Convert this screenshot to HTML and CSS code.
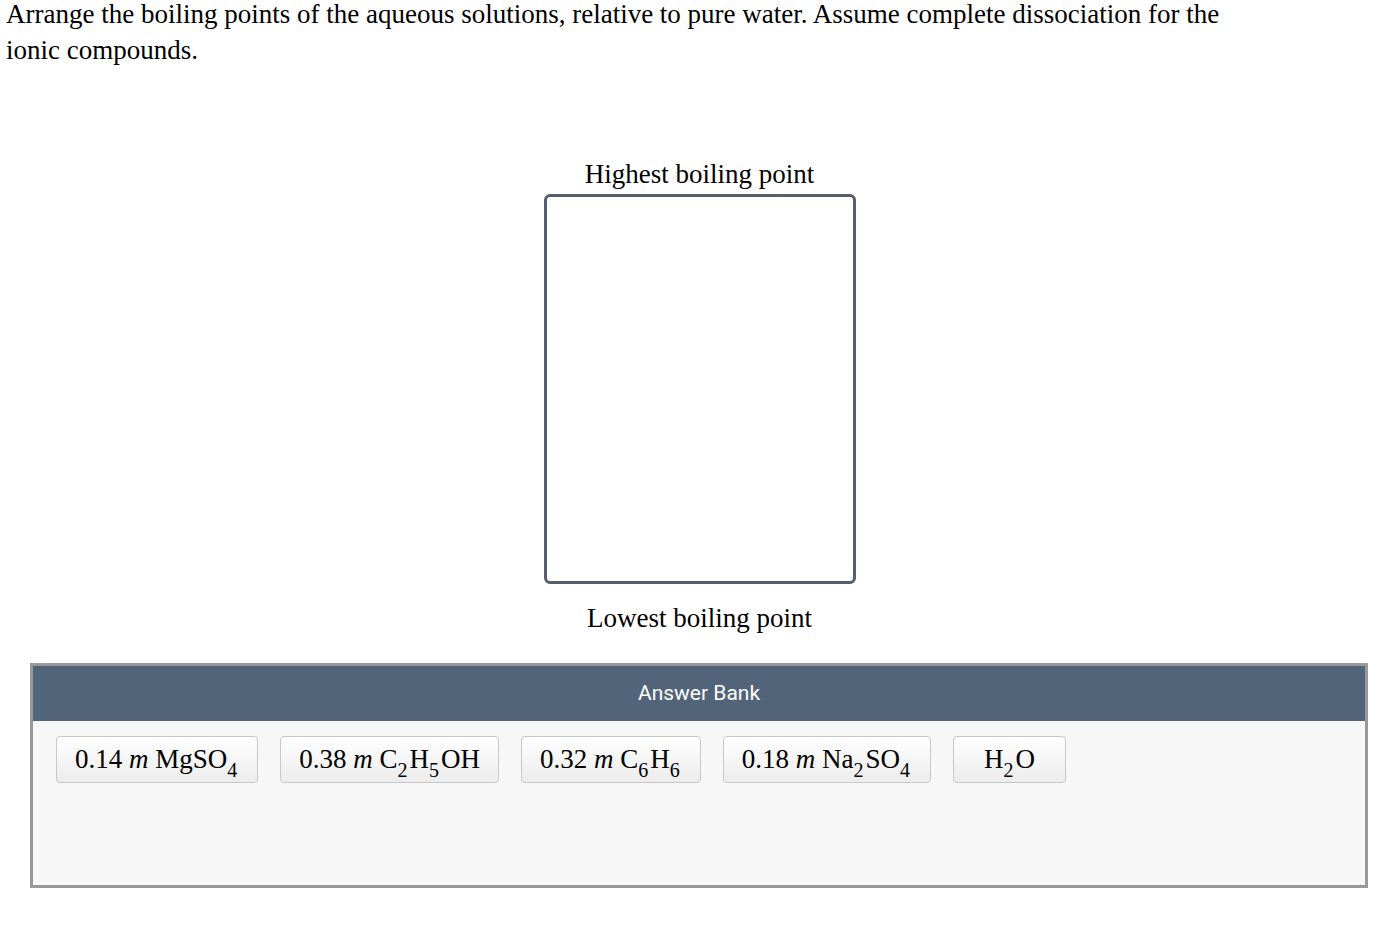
FILE: index.html
```html
<html>

<head>
  <title>Boiling point ranking</title>
  <meta charset="UTF-8">
  <link rel="stylesheet" href="styles.css">
</head>

<body>
  <p class="question">Arrange the boiling points of the aqueous solutions, relative to pure water. Assume complete dissociation for the ionic compounds.</p>

  <div class="rank">
    <div class="label">Highest boiling point</div>
    <div class="target"></div>
    <div class="label label-low">Lowest boiling point</div>
  </div>

  <div class="bank">
    <div class="bank-head">Answer Bank</div>
    <div class="bank-body">
      <div class="chip">0.14 <i>m</i> MgSO<sub>4</sub></div>
      <div class="chip">0.38 <i>m</i> C<sub>2</sub>H<sub>5</sub>OH</div>
      <div class="chip">0.32 <i>m</i> C<sub>6</sub>H<sub>6</sub></div>
      <div class="chip">0.18 <i>m</i> Na<sub>2</sub>SO<sub>4</sub></div>
      <div class="chip chip-water">H<sub>2</sub>O</div>
    </div>
  </div>
</body>

</html>
```

FILE: styles.css
```css
body {
  margin: 0;
  background: #fff;
  color: #000;
  font-family: "Liberation Serif", "Times New Roman", serif;
}

.question {
  max-width: 1250px;
  margin: -4px 0 0 6px;
  font-size: 27px;
  line-height: 36px;
}

/* drop zone in the middle */
.rank {
  display: flex;
  flex-direction: column;
  align-items: center;
  margin-top: 91px;
  padding-left: 4px;
}

.label {
  font-size: 27px;
  line-height: 30px;
}

.target {
  width: 306px;
  height: 384px;
  margin-top: 5px;
  border: 3px solid #545f70;
  border-radius: 6px;
}

.label-low {
  margin-top: 19px;
}

/* answer bank panel */
.bank {
  width: 1332px;
  margin: 30px 0 0 30px;
  border: 3px solid #999;
  background: #f7f7f7;
}

.bank-head {
  height: 55px;
  line-height: 55px;
  text-align: center;
  background: #52647a;
  color: #fff;
  font-family: Roboto, "Liberation Sans", sans-serif;
  font-size: 21px;
}

.bank-body {
  display: flex;
  align-items: flex-start;
  gap: 22px;
  height: 149px;
  padding: 15px 0 0 23px;
}

.chip {
  height: 45px;
  padding: 0 18px;
  line-height: 45px;
  font-size: 27px;
  white-space: nowrap;
  border: 1px solid #c8c8c8;
  border-radius: 4px;
  background: linear-gradient(#fff, #ececec);
}

.chip sub {
  margin-right: 2px;
  font-size: 20px;
  line-height: 0;
  vertical-align: -9px;
}

.chip-water {
  padding: 0 30px;
}
```
